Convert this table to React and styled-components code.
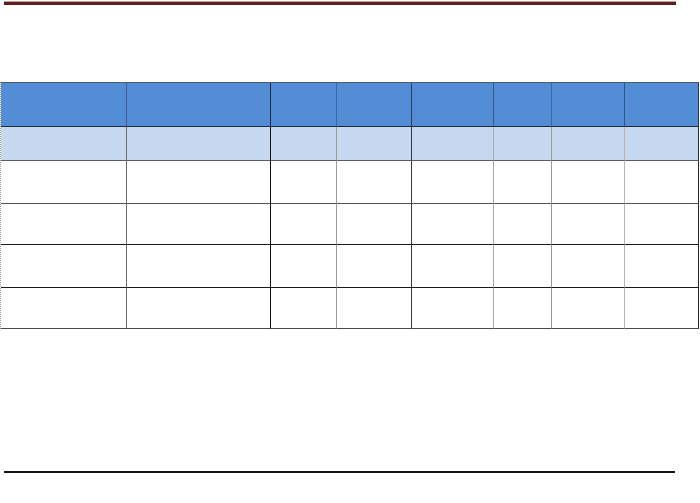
import React from "react";
import styled, { createGlobalStyle } from "styled-components";

const GlobalStyle = createGlobalStyle`
	html, body {
		margin: 0;
		padding: 0;
		background: #ffffff;
		font-family: "Liberation Sans", Arial, sans-serif;
	}
`;

// column widths, taken between the grid lines
const columns = [126, 144, 66, 75, 82, 58, 73, 74];
// colour of the line on the right of each column
const columnLines = ["#6a6a6a", "#111111", "#9c9c9c", "#34373d", "#a9a9a9", "#9a9a9a", "#c2b0b0", "#2a2a2a"];
// header cells sit on the blue, so their lines read darker
const headerLines = ["#45608a", "#1c2a40", "#3a69ab", "#2a3f60", "#34578a", "#3b6aa8", "#2f5587", "#2a3a55"];

const rows = [
	{ kind: "head", height: 44, line: "#23272e" },
	{ kind: "band", height: 34, line: "#585c63" },
	{ kind: "body", height: 43, line: "#4d525c" },
	{ kind: "body", height: 41, line: "#1a1a1a" },
	{ kind: "body", height: 43, line: "#1a1a1a" },
	{ kind: "body", height: 41, line: "#474a50" },
];

const fills = {
	head: "#538dd5",
	band: "#c6d9f0",
	body: "#ffffff",
};

export default function App() {
	return (
		<>
			<GlobalStyle />
			<Page>
				<TopRule />
				<Grid>
					{rows.map((row, r) =>
						columns.map((w, c) => (
							<Cell
								key={r + "-" + c}
								$h={row.height}
								$fill={fills[row.kind]}
								$right={row.kind === "head" ? headerLines[c] : columnLines[c]}
								$bottom={row.line}
							/>
						))
					)}
				</Grid>
				<BottomRule />
			</Page>
		</>
	);
}

const Page = styled.div`
	width: 700px;
	height: 503px;
	padding-top: 1px;
	box-sizing: border-box;
	display: flex;
	flex-direction: column;
	overflow: hidden;
`;

const TopRule = styled.div`
	margin-left: 4px;
	width: 672px;
	height: 4px;
	box-sizing: border-box;
	border-top: 1px solid #b3a5a5;
	background: #621d1d;
`;

const Grid = styled.div`
	margin-top: 77px;
	display: grid;
	grid-template-columns: ${columns.map((w) => w + "px").join(" ")};
	width: max-content;
	border-top: 1px solid #50555e;
	border-left: 1px dotted #a0a0a0;
`;

const Cell = styled.div`
	height: ${(p) => p.$h}px;
	box-sizing: border-box;
	background: ${(p) => p.$fill};
	border-right: 1px solid ${(p) => p.$right};
	border-bottom: 1px solid ${(p) => p.$bottom};
`;

const BottomRule = styled.div`
	margin-top: 142px;
	margin-left: 4px;
	width: 671px;
	height: 2px;
	background: #111111;
`;
